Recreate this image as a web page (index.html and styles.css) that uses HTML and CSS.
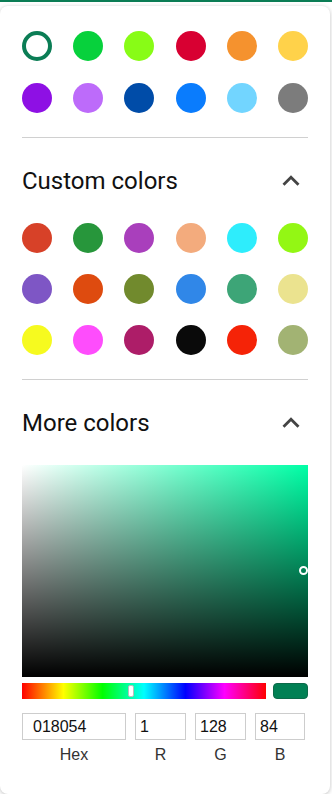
FILE: index.html
```html
<!DOCTYPE html>
<html lang="en">
<head>
    <meta charset="UTF-8">
    <meta name="viewport" content="width=device-width, initial-scale=1.0">
    <title>Color picker</title>
    <link rel="stylesheet" href="styles.css">
</head>
<body>
    <div class="top-bar"></div>
    <div class="card">
        <div class="swatches">
            <span class="dot selected"></span>
            <span class="dot" style="background:#07d13c"></span>
            <span class="dot" style="background:#88fc16"></span>
            <span class="dot" style="background:#d80032"></span>
            <span class="dot" style="background:#f5922e"></span>
            <span class="dot" style="background:#ffd24a"></span>
            <span class="dot" style="background:#8e10e4"></span>
            <span class="dot" style="background:#bd6bfa"></span>
            <span class="dot" style="background:#004ca8"></span>
            <span class="dot" style="background:#0a7cfd"></span>
            <span class="dot" style="background:#72d5ff"></span>
            <span class="dot" style="background:#7c7c7c"></span>
        </div>

        <div class="divider"></div>
        <div class="section-header">
            <span>Custom colors</span>
            <svg class="chevron" viewBox="0 0 24 24"><path d="M12 8l-6 6 1.41 1.41L12 10.83l4.59 4.58L18 14z"/></svg>
        </div>
        <div class="swatches custom">
            <span class="dot" style="background:#d74128"></span>
            <span class="dot" style="background:#27963b"></span>
            <span class="dot" style="background:#a93fbc"></span>
            <span class="dot" style="background:#f3ab7d"></span>
            <span class="dot" style="background:#2eedfc"></span>
            <span class="dot" style="background:#93f714"></span>
            <span class="dot" style="background:#7e56c5"></span>
            <span class="dot" style="background:#de4b0f"></span>
            <span class="dot" style="background:#718a2d"></span>
            <span class="dot" style="background:#3087e8"></span>
            <span class="dot" style="background:#3da577"></span>
            <span class="dot" style="background:#ebe38f"></span>
            <span class="dot" style="background:#f6fa1f"></span>
            <span class="dot" style="background:#fe4dfc"></span>
            <span class="dot" style="background:#ad1d68"></span>
            <span class="dot" style="background:#0a0a0a"></span>
            <span class="dot" style="background:#f52307"></span>
            <span class="dot" style="background:#a2b373"></span>
        </div>

        <div class="divider"></div>
        <div class="section-header">
            <span>More colors</span>
            <svg class="chevron" viewBox="0 0 24 24"><path d="M12 8l-6 6 1.41 1.41L12 10.83l4.59 4.58L18 14z"/></svg>
        </div>
        <div class="sv-area">
            <span class="sv-cursor"></span>
        </div>
        <div class="hue-row">
            <div class="hue-bar">
                <span class="hue-thumb"></span>
            </div>
            <div class="preview"></div>
        </div>
        <div class="fields">
            <input class="field hex" type="text" value="018054">
            <input class="field" type="text" value="1">
            <input class="field" type="text" value="128">
            <input class="field" type="text" value="84">
            <label>Hex</label>
            <label>R</label>
            <label>G</label>
            <label>B</label>
        </div>
    </div>
</body>
</html>
```

FILE: styles.css
```css
body {
    margin: 0;
    background-color: white;
    font-family: Roboto, "Liberation Sans", sans-serif;
    color: #111;
}
.top-bar {
    height: 2px;
    background-color: #0b7d55;
}
.card {
    margin: 4px 2px 0 0;
    padding: 25px 22px 31px 22px;
    background-color: white;
    border-radius: 8px;
    box-shadow: 0 1px 4px rgba(0, 0, 0, 0.25);
}
.swatches {
    display: grid;
    grid-template-columns: repeat(6, 30px);
    justify-content: space-between;
    row-gap: 22px;
}
.swatches.custom {
    row-gap: 21px;
}
.dot {
    width: 30px;
    height: 30px;
    border-radius: 50%;
    box-sizing: border-box;
}
.dot.selected {
    border: 4px solid #0b7d55;
    background-color: white;
}
.divider {
    height: 1px;
    margin-top: 24px;
    background-color: #d0d0d0;
}
.section-header {
    height: 85px;
    display: flex;
    justify-content: space-between;
    align-items: center;
    font-size: 24px;
}
.chevron {
    width: 34px;
    height: 34px;
    fill: #444;
}
.sv-area {
    position: relative;
    height: 212px;
    background:
        linear-gradient(to top, #000, rgba(0, 0, 0, 0)),
        linear-gradient(to right, #fff, rgba(255, 255, 255, 0)),
        hsl(159, 100%, 50%);
}
.sv-cursor {
    position: absolute;
    left: 277px;
    top: 101px;
    width: 9px;
    height: 9px;
    box-sizing: border-box;
    border: 2px solid white;
    border-radius: 50%;
}
.hue-row {
    display: flex;
    gap: 7px;
    margin-top: 6px;
}
.hue-bar {
    position: relative;
    flex: 1;
    height: 16px;
    background: linear-gradient(to right, #f00, #ff0 17%, #0f0 33%, #0ff 50%, #00f 67%, #f0f 83%, #f00);
}
.hue-thumb {
    position: absolute;
    left: 106px;
    top: 2px;
    width: 6px;
    height: 12px;
    box-sizing: border-box;
    background-color: white;
    border: 1px solid #bbb;
    border-radius: 2px;
}
.preview {
    width: 35px;
    height: 16px;
    box-sizing: border-box;
    background-color: #018054;
    border: 1px solid #0c6a49;
    border-radius: 4px;
}
.fields {
    display: grid;
    grid-template-columns: 104px 51px 51px 50px;
    column-gap: 9px;
    row-gap: 7px;
    margin-top: 14px;
    font-family: "Liberation Sans", Arial, sans-serif;
}
.field {
    height: 27px;
    box-sizing: border-box;
    margin: 0;
    padding: 0 4px;
    border: 1px solid #cdcdcd;
    font-family: inherit;
    font-size: 16px;
    color: #111;
    min-width: 0;
}
.field.hex {
    padding-left: 10px;
}
.fields label {
    text-align: center;
    font-size: 16px;
    line-height: 16px;
    color: #333;
}
```
